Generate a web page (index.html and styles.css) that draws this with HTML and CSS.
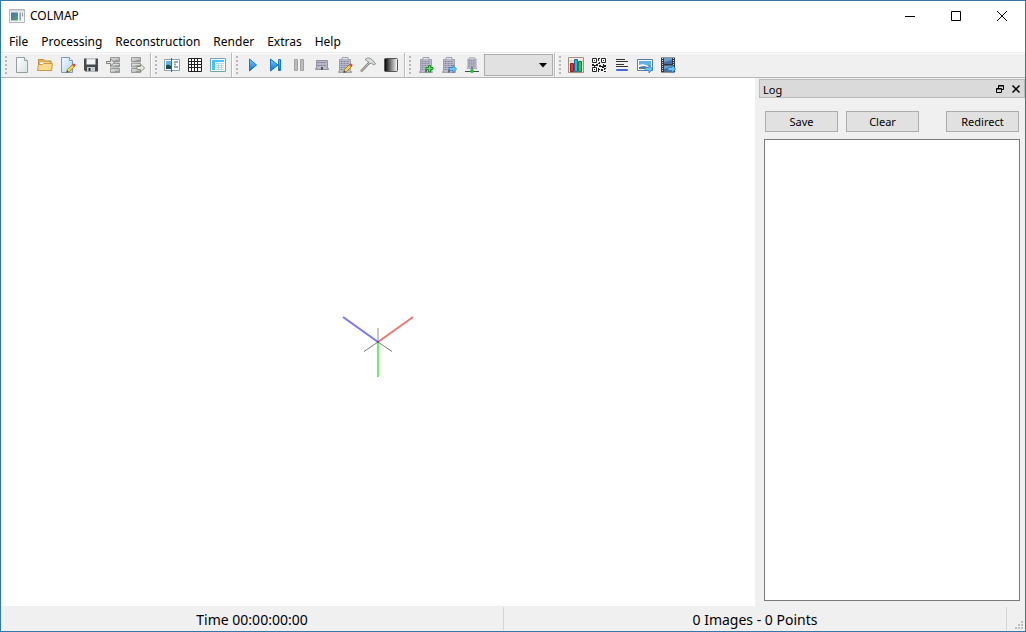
FILE: index.html
```html
<!DOCTYPE html>
<html lang="en">
<head>
<meta charset="utf-8">
<title>COLMAP</title>
<link rel="stylesheet" href="styles.css">
</head>
<body>
<svg class="defs" aria-hidden="true">
  <defs>
    <linearGradient id="blue" x2="0" y2="1"><stop stop-color="#79cdf8"/><stop offset="1" stop-color="#0870cd"/></linearGradient>
    <linearGradient id="page" x2="1" y2="1"><stop stop-color="#fff"/><stop offset="1" stop-color="#d4e3e2"/></linearGradient>
    <linearGradient id="bluepage" x2="1" y2="1"><stop stop-color="#f6fbff"/><stop offset="1" stop-color="#a9d0f3"/></linearGradient>
    <linearGradient id="ramp"><stop stop-color="#000"/><stop offset="1" stop-color="#fff"/></linearGradient>
    <linearGradient id="rack"><stop stop-color="#d2d2d2"/><stop offset=".6" stop-color="#b0b0b7"/><stop offset="1" stop-color="#888"/></linearGradient>
    <symbol id="building" viewBox="0 0 16 16">
      <path d="M5 .5h6v2h2.500v12h1v1h-13v-1h1v-12H5z" fill="#b9b9ca" stroke="#92929f" stroke-width=".8"/>
      <path d="M3.500 4.500h9M3.500 6.500h9M3.500 8.500h9M3.500 10.500h9M3.500 12.500h9" stroke="#8585a0" stroke-dasharray="2 1"/>
      <path d="M5.500 1.500h5" stroke="#e3e3ed"/>
      <path d="M7 13h2v2.500H7z" fill="#68687a"/>
    </symbol>
    <symbol id="servers" viewBox="0 0 16 16">
      <path d="M4.500.5h9v4h-9zM4.500 6h9v4h-9zM4.500 11.500h9v4h-9z" fill="url(#rack)" stroke="#999"/>
      <path d="M5 2h8M5 7.500h8M5 13h8" stroke="#dedee4"/>
      <path d="M9 3.500h4M9 9h4M9 14.500h4" stroke="#8fa389"/>
    </symbol>
    <symbol id="pencil" viewBox="0 0 16 16">
      <path d="M6.500 15.500l1-3 5-5 2 2-5 5z" fill="#f8d63f" stroke="#8e7135" stroke-width=".7"/>
      <path d="M12 8l1.200-1.200a1 1 0 0 1 1.300 0l.8.8a1 1 0 0 1 0 1.300L14 10z" fill="#df4545"/>
      <path d="M6.500 15.500l.6-2 1.400 1.400z" fill="#333"/>
    </symbol>
    <symbol id="arrow" viewBox="0 0 16 16">
      <path d="M8 10.500h4V8l3.500 4-3.500 4v-2.500H8z" fill="#6cc4fb" stroke="#2e7fc4" stroke-width=".8"/>
    </symbol>
  </defs>
</svg>
<div class="window">
  <header class="titlebar">
    <svg class="app-icon" viewBox="0 0 16 14"><defs><linearGradient id="app" x2="1" y2="1"><stop stop-color="#496bb7"/><stop offset="1" stop-color="#56aa68"/></linearGradient></defs><path d="M.5.5h15v13H.5z" fill="#f4f4f4" stroke="#b1b5b9"/><path d="M1 1h14v1.500H1z" fill="#d4d8dc"/><path d="M2 3.500h7v8H2z" fill="url(#app)"/><path d="M10.500 3.500h1.500v8h-1.500zM13 3.500h1v4h-1z" fill="#8c9bae"/></svg>
    <h1 class="title">COLMAP</h1>
    <div class="window-controls">
      <button class="window-button" aria-label="Minimize"><svg viewBox="0 0 12 12"><path d="M1 6.500h10"/></svg></button>
      <button class="window-button" aria-label="Maximize"><svg viewBox="0 0 12 12"><path d="M1.500 1.500h9v9h-9z"/></svg></button>
      <button class="window-button" aria-label="Close"><svg viewBox="0 0 12 12"><path d="M1 1l10 10M11 1L1 11"/></svg></button>
    </div>
  </header>
  <nav class="menubar">
    <button class="menu">File</button>
    <button class="menu">Processing</button>
    <button class="menu">Reconstruction</button>
    <button class="menu">Render</button>
    <button class="menu">Extras</button>
    <button class="menu">Help</button>
  </nav>
  <div class="toolbars">
    <div class="toolbar" role="toolbar" aria-label="File">
      <span class="handle"></span>
      <button class="tool" aria-label="New project"><svg viewBox="0 0 16 16"><path d="M2.500.5h8l3 3v12h-11z" fill="url(#page)" stroke="#8fa09f"/><path d="M10.500.5v3h3" fill="#fff" stroke="#8fa09f"/></svg></button>
      <button class="tool" aria-label="Open project"><svg viewBox="0 0 16 16"><path d="M1.500 13.500v-11h5l1 1.500h6.500v9.500z" fill="#e2b358" stroke="#bd8c34"/><path d="M3 5.500h10V8H3z" fill="#fff"/><path d="M.5 13.500l1-6h4l1-1h9l-1 7z" fill="#f9da8c" stroke="#c99a42"/></svg></button>
      <button class="tool" aria-label="Edit project"><svg viewBox="0 0 16 16"><path d="M1.500.5h8l3 3v12h-11z" fill="url(#bluepage)" stroke="#7899bb"/><path d="M9.500.5v3h3" fill="#fff" stroke="#7899bb"/><use href="#pencil"/></svg></button>
      <button class="tool" aria-label="Save project"><svg viewBox="0 0 16 16"><path d="M1 1.500h14v13H2.500L1 13z" fill="#46494d"/><path d="M3.500 1.500h9v6h-9z" fill="#f2f4f4"/><path d="M3.500 2h9" stroke="#b9c1c5"/><path d="M4 10h8v4.500H4z" fill="#c4cbd0"/><path d="M5.500 11h2v3h-2z" fill="#303236"/></svg></button>
      <button class="tool" aria-label="Import model"><svg viewBox="0 0 16 16"><use href="#servers"/><path d="M.5 4.500h4V2l4 3.500-4 3.500V6.500h-4z" fill="#e3e5e3" stroke="#7f827f"/></svg></button>
      <button class="tool" aria-label="Export model"><svg viewBox="0 0 16 16"><use href="#servers" x="-2"/><path d="M8 9.500h3.500V7l4 4-4 4v-2.500H8z" fill="#e6ece4" stroke="#83917f"/></svg></button>
    </div>
    <div class="toolbar" role="toolbar" aria-label="Processing">
      <span class="handle"></span>
      <button class="tool" aria-label="Feature extraction"><svg viewBox="0 0 16 16"><path d="M.5 2.500h15v11H.5z" fill="#fff" stroke="#83a1b5"/><path d="M2 4h6v8H2z" fill="#62b4e6"/><path d="M2 8.500l2-1 4 2V12H2z" fill="#174b4e"/><path d="M10 5h4M10 7.500h2M10 10h4" stroke="#9ba5b0" stroke-width="2"/><path d="M7.500 1v14" stroke="#2368d0"/></svg></button>
      <button class="tool" aria-label="Feature matching"><svg viewBox="0 0 16 16"><path d="M1.500 1.500h13v13h-13zM1 4.500h14M1 7.500h14M1 10.500h14M4.500 1v14M7.500 1v14M10.500 1v14" fill="#fff" stroke="#202020"/></svg></button>
      <button class="tool" aria-label="Database management"><svg viewBox="0 0 16 16"><path d="M.5 1.500h15v13H.5z" fill="#fff" stroke="#72a4b9"/><path d="M2 3h12v2H2zM2 5h3v8H2z" fill="#42c6f7"/><path d="M6 6.500h8M6 8.500h8M6 10.500h8M6 12.500h8M8.500 6v7M11.500 6v7" stroke="#a9c7d2" stroke-width=".7"/></svg></button>
    </div>
    <div class="toolbar" role="toolbar" aria-label="Reconstruction">
      <span class="handle"></span>
      <button class="tool" aria-label="Start reconstruction"><svg viewBox="0 0 16 16"><path d="M4.500 2l7 6-7 6z" fill="url(#blue)" stroke="#1677c7"/></svg></button>
      <button class="tool" aria-label="Reconstruct next image"><svg viewBox="0 0 16 16"><path d="M2.500 2l7.500 6-7.500 6zM10.500 2.500h2v11h-2z" fill="url(#blue)" stroke="#1677c7"/></svg></button>
      <button class="tool" aria-label="Pause reconstruction"><svg viewBox="0 0 16 16"><path d="M3.500 2.500h3v11h-3zM9.500 2.500h3v11h-3z" fill="#bcbcbc" stroke="#a3a3a3"/></svg></button>
      <button class="tool" aria-label="Bundle adjustment"><svg viewBox="0 0 16 16"><path d="M2.500 3.500h11v8h1v1h-13v-1h1z" fill="#b9b9ca" stroke="#92929f"/><path d="M3.500 5.500h9M3.500 8.500h9" stroke="#77778f" stroke-dasharray="2 1"/><path d="M7 10h2v3H7z" fill="#555563"/></svg></button>
      <button class="tool" aria-label="Reconstruction options"><svg viewBox="0 0 16 16"><use href="#building"/><use href="#pencil"/></svg></button>
      <button class="tool" aria-label="Dense reconstruction"><svg viewBox="0 0 16 16"><path d="M1 14.500L10 5" stroke="#797979" stroke-width="2.500"/><path d="M1 14.500L10 5" stroke="#d6cfc7"/><path d="M5 2.500C7 .5 9.500.5 12 2.500l1.500 1.500 2 3-2 1-2-2-2 1L7.500 4z" fill="#d9dcdc" stroke="#777b7b" stroke-width=".8"/></svg></button>
      <button class="tool" aria-label="Render options"><svg viewBox="0 0 16 16"><rect x="1.500" y="1.500" width="13" height="13" rx="1" fill="url(#ramp)" stroke="#555"/></svg></button>
    </div>
    <div class="toolbar" role="toolbar" aria-label="Models">
      <span class="handle"></span>
      <button class="tool" aria-label="Add model"><svg viewBox="0 0 16 16"><use href="#building"/><path d="M10.500 8.500h2v2h2.500v2h-2.500v2.500h-2v-2.500H8v-2h2.500z" fill="#5fea55" stroke="#169325"/></svg></button>
      <button class="tool" aria-label="Move model"><svg viewBox="0 0 16 16"><use href="#building"/><use href="#arrow"/></svg></button>
      <button class="tool" aria-label="Model statistics"><svg viewBox="0 0 16 16"><use href="#building" x="2" y="0" width="12" height="12"/><path d="M1 14.500h14" stroke="#46504a"/><path d="M8 12v2" stroke="#555"/><circle cx="8" cy="14" r="2" fill="#28b843"/></svg></button>
      <select class="model-select" aria-label="Model"><option></option></select>
    </div>
    <div class="toolbar last" role="toolbar" aria-label="Extras">
      <span class="handle"></span>
      <button class="tool" aria-label="Show statistics"><svg viewBox="0 0 16 16"><path d="M.5.5h15v15H.5z" fill="#f6eee2" stroke="#a48f78"/><path d="M1 4h14M1 8h14M1 12h14" stroke="#d0c2b2"/><path d="M2.500 6.500h3v8h-3z" fill="#e62f39" stroke="#9b1721"/><path d="M6.500 2.500h3v12h-3z" fill="#28b2e3" stroke="#176c99"/><path d="M10.500 4.500h3v10h-3z" fill="#2ec95d" stroke="#158138"/></svg></button>
      <button class="tool" aria-label="Show match matrix"><svg viewBox="0 0 16 16"><path d="M1 1h5v5H1zM10 1h5v5h-5zM1 10h5v5H1z" fill="#fff"/><path d="M1.500 1.500h4v4h-4zM10.500 1.500h4v4h-4zM1.500 10.500h4v4h-4z" fill="none" stroke="#222"/><path d="M3 3h1v1H3zM12 3h1v1h-1zM3 12h1v1H3zM7 1h2v1H8v2H7zM8 5h1v2H7V6h1zM1 7h2v1h2V7h2v2H4v1H3V9H1zM8 8h2v1h2V7h1v1h2v2h-2v1h-2v-1H8zM7 11h1v1h1v1H8v2H7zM10 12h2v2h-2zM13 11h2v1h-1v1h-1zM13 14h2v1h-2z" fill="#222"/></svg></button>
      <button class="tool" aria-label="Show log"><svg viewBox="0 0 16 16"><path d="M2 2.500h9M2 4.500h12M2 7.500h8M2 9.500h12" stroke="#333"/><path d="M2.500 12.500h11v1h-11z" fill="#c3d0ff" stroke="#4966d8"/></svg></button>
      <button class="tool" aria-label="Grab image"><svg viewBox="0 0 16 16"><path d="M.5 2.500h15v11H.5z" fill="#fff" stroke="#517eab"/><path d="M2 4h12v8H2z" fill="#62b1e8"/><path d="M2 8l4-1 8 3v2H2z" fill="#eef5f7"/><path d="M2 10l5-1 7 2v1H2z" fill="#53789a"/><use href="#arrow"/></svg></button>
      <button class="tool" aria-label="Grab movie"><svg viewBox="0 0 16 16"><path d="M1 .5h14v15H1z" fill="#303740"/><path d="M2.500 1v14M13.500 1v14" stroke="#cbd5dc" stroke-dasharray="1 1"/><path d="M4 1h8v6H4zM4 8.500h8V15H4z" fill="#6b9cce"/><path d="M4 5l8-2v4H4zM4 12l8-2v5H4z" fill="#476e9c"/><use href="#arrow"/></svg></button>
    </div>
  </div>
  <main class="workspace">
    <section class="viewport" aria-label="Model viewer">
      <svg class="axes" viewBox="0 0 72 62">
        <path d="M36 26V12" stroke="#c8c8c8" stroke-width="2"/>
        <path d="M36 26L22 35.500M36 26l14 9.500" stroke="#777"/>
        <path d="M36 26L1 1" stroke="#7777f0" stroke-width="2"/>
        <path d="M36 26L71 1" stroke="#f07777" stroke-width="2"/>
        <path d="M36 26v35" stroke="#70ee70" stroke-width="2"/>
        <path d="M35 25h2v2h-2z" fill="#666"/>
      </svg>
    </section>
    <aside class="dock">
      <div class="dock-title">
        <h2 class="dock-name">Log</h2>
        <button class="dock-button" aria-label="Float"><svg viewBox="0 0 10 10"><path d="M3.500 4V1.500h5v4H7M3 2h6M1.500 4.500h5v4h-5zM1 5h6"/></svg></button>
        <button class="dock-button" aria-label="Close log"><svg viewBox="0 0 10 10"><path d="M1.500 1.500l7 7M8.500 1.500l-7 7" stroke-width="1.500"/></svg></button>
      </div>
      <div class="dock-body">
        <div class="actions">
          <button class="action">Save</button>
          <button class="action">Clear</button>
          <button class="action redirect">Redirect</button>
        </div>
        <textarea class="log" aria-label="Log output" readonly></textarea>
      </div>
    </aside>
  </main>
  <footer class="statusbar">
    <div class="status">Time 00:00:00:00</div>
    <div class="status">0 Images - 0 Points</div>
    <svg class="grip" viewBox="0 0 10 10"><path d="M7 1h2v2H7zM4 4h2v2H4zM7 4h2v2H7zM1 7h2v2H1zM4 7h2v2H4zM7 7h2v2H7z" fill="#bfbfbf"/></svg>
  </footer>
</div>
</body>
</html>
```
FILE: styles.css
```css
* { box-sizing: border-box; }
body { margin: 0; font: 12px/16px "Noto Sans", "Open Sans", sans-serif; color: #000; }
button { margin: 0; padding: 0; border: 0; background: none; font: inherit; color: inherit; }
svg { display: block; fill: none; }
h1, h2 { margin: 0; font: inherit; }
.defs { position: absolute; width: 0; height: 0; }
.window { display: flex; flex-direction: column; height: 100vh; border: 1px solid #3578a8; background: #fff; }
.titlebar { display: flex; align-items: center; height: 29px; padding-left: 8px; flex: none; }
.app-icon { width: 16px; height: 14px; margin-right: 5px; }
.window-controls { display: flex; margin-left: auto; }
.window-button { display: flex; align-items: center; justify-content: center; width: 46px; height: 29px; }
.window-button svg { width: 12px; height: 12px; stroke: #000; }
.menubar { display: flex; gap: 13px; height: 22px; padding: 2px 8px 0; flex: none; }
.toolbars { display: flex; height: 26px; border-top: 1px solid #e9e9e9; border-bottom: 1px solid #b5b5b5; background: #f0f0f0; flex: none; }
.toolbar { display: flex; align-items: center; padding: 0 2px 0 4px; border-right: 1px solid #b9b9b9; box-shadow: inset 1px 1px #fff; }
.toolbar.last { flex: 1; border-right: 0; }
.handle { width: 2px; height: 18px; margin-right: 3px; background: repeating-linear-gradient(#b8b8b8 0 2px, transparent 2px 4px); }
.tool { display: flex; align-items: center; justify-content: center; width: 23px; height: 23px; }
.tool svg { width: 16px; height: 16px; }
.model-select { width: 69px; height: 22px; margin-left: 1px; margin-right: -1px; border: 1px solid #adadad; border-radius: 0; appearance: none; background: #e1e1e1 url("data:image/svg+xml,%3Csvg xmlns='http://www.w3.org/2000/svg' width='8' height='5'%3E%3Cpath d='M0 0h8L4 4.500z'/%3E%3C/svg%3E") no-repeat right 5px center; }
.workspace { display: flex; flex: 1; min-height: 0; }
.viewport { display: flex; flex: 1; align-items: center; justify-content: center; padding-top: 10px; }
.axes { width: 72px; height: 62px; }
.dock { display: flex; flex-direction: column; width: 270px; padding: 1px 0 5px 4px; background: #f0f0f0; font-size: 11px; }
.dock-title { display: flex; align-items: center; height: 19px; padding: 0 3px; border: 1px solid #b9b9b9; background: #dadada; }
.dock-name { flex: 1; padding-top: 2px; }
.dock-button { width: 10px; height: 10px; margin-left: 6px; }
.dock-button svg { width: 10px; height: 10px; stroke: #000; }
.dock-body { display: flex; flex-direction: column; flex: 1; gap: 7px; padding: 13px 5px 0; }
.actions { display: flex; gap: 8px; padding: 0 1px; }
.action { width: 73px; height: 21px; border: 1px solid #adadad; background: #e1e1e1; }
.redirect { margin-left: auto; }
.log { flex: 1; width: 100%; border: 1px solid #7a7a7a; border-radius: 0; background: #fff; resize: none; outline: 0; }
.statusbar { display: flex; height: 25px; padding: 1px 1px 1px 0; background: #f0f0f0; font-size: 14px; line-height: 25px; flex: none; }
.status { flex: 1; border-right: 1px solid #d5d5d5; text-align: center; }
.grip { width: 10px; height: 10px; margin: 13px 0 0 7px; }
```
